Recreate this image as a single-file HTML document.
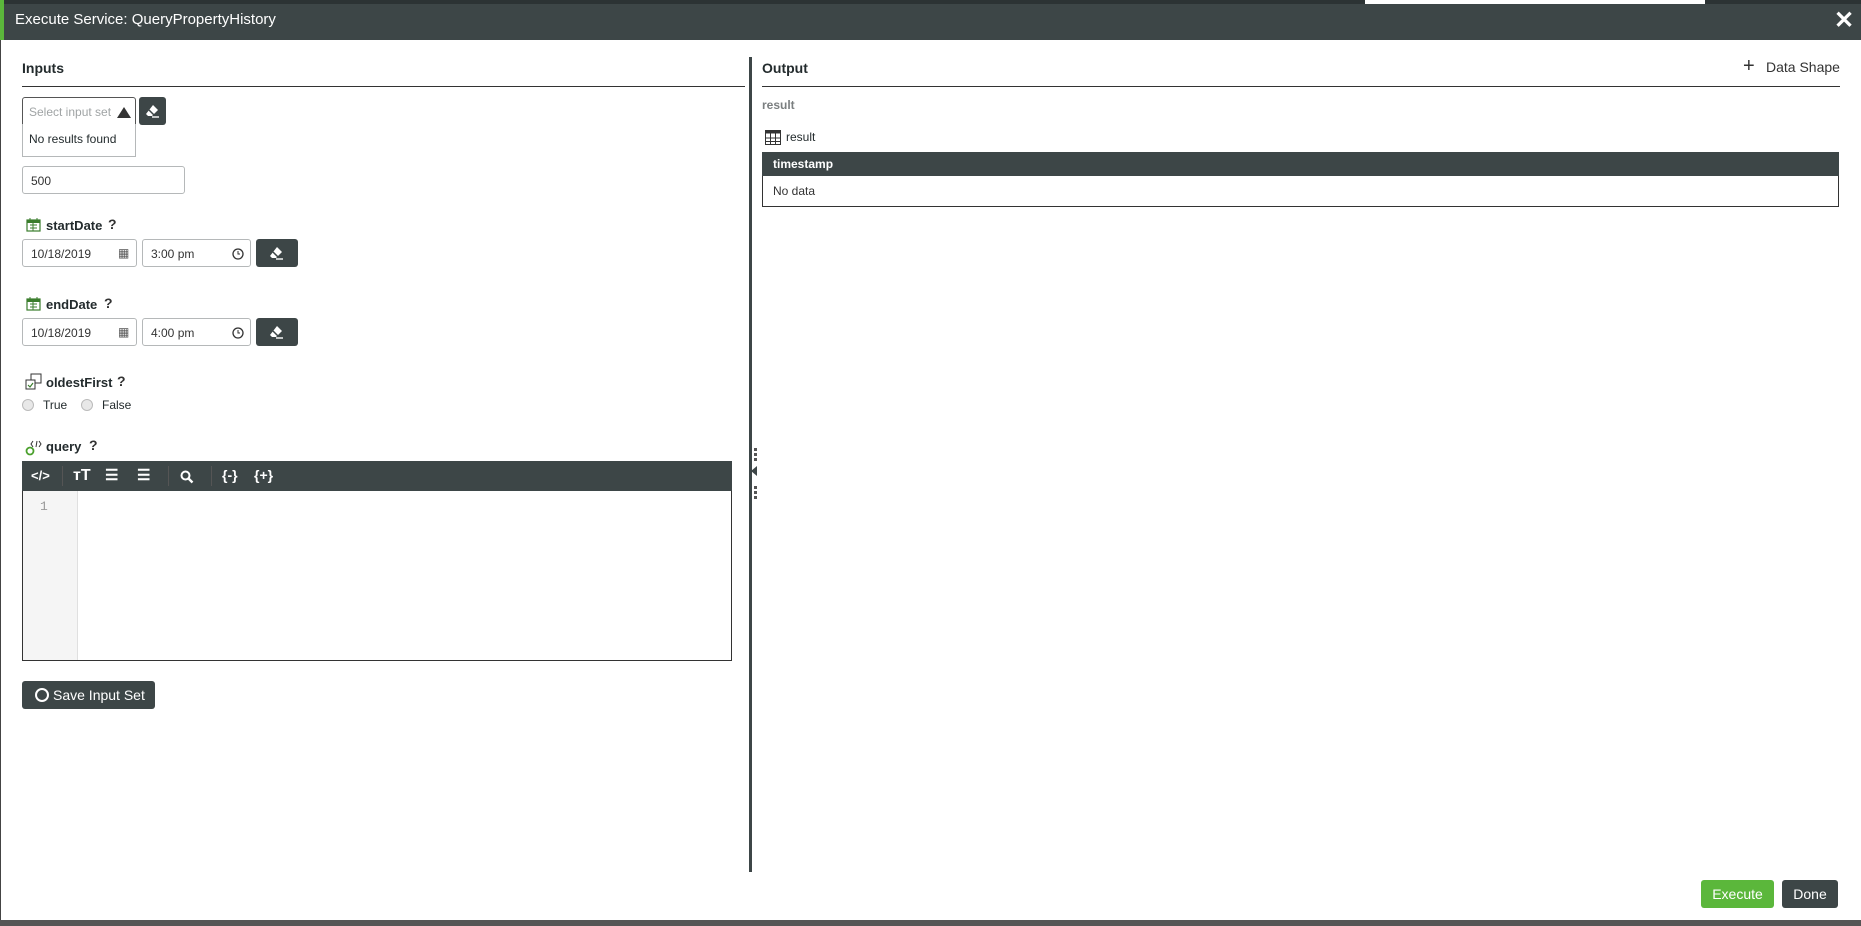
<!DOCTYPE html>
<html><head><meta charset="utf-8"><style>
*{box-sizing:border-box;margin:0;padding:0}
body{width:1861px;height:926px;position:relative;overflow:hidden;background:#fff;font-family:"Liberation Sans",Arial,sans-serif;color:#232b2d}
.a{position:absolute}
.hdr{left:0;top:0;width:1861px;height:40px;background:#3d4647}
.btn{background:#3d4647;border-radius:3px}
.inp{border:1px solid #b5b8b9;border-radius:3px;background:#fff;font-size:12px;color:#333}
.lbl{font-size:13px;font-weight:bold;color:#232b2d}
.q{font-size:14px;font-weight:bold;color:#333}
.tb{color:#fff;font-size:15px;font-weight:bold}
</style></head><body>
<div class="a hdr"></div>
<div class="a" style="left:0;top:0;width:1861px;height:4px;background:#2c3334"></div>
<div class="a" style="left:1365px;top:0;width:340px;height:4px;background:#fff"></div>
<div class="a" style="left:0;top:0;width:4px;height:40px;background:#5bb73b"></div>
<div class="a" style="left:15px;top:11px;font-size:15px;color:#fff">Execute Service: QueryPropertyHistory</div>
<div class="a" style="left:1834px;top:6px;font-size:24px;color:#fff;font-weight:bold">✕</div>
<div class="a" style="left:0;top:40px;width:1px;height:880px;background:#444"></div>

<div class="a" style="left:22px;top:60px;font-size:14px;font-weight:bold">Inputs</div>
<div class="a" style="left:22px;top:86px;width:723px;height:1px;background:#333"></div>

<div class="a inp" style="left:22px;top:97px;width:114px;height:28px;border-color:#555;border-radius:3px 3px 0 0"><span class="a" style="left:6px;top:7px;color:#a0a4a5">Select input set</span><span class="a" style="left:94px;top:9px;width:0;height:0;border-left:7px solid transparent;border-right:7px solid transparent;border-bottom:11px solid #333"></span></div>
<div class="a" style="left:22px;top:124px;width:114px;height:33px;border:1px solid #b5b8b9;border-top:none;background:#fff;font-size:12px"><span class="a" style="left:6px;top:8px">No results found</span></div>
<div class="a btn" style="left:139px;top:97px;width:27px;height:28px"><svg class="a" style="left:6px;top:7px" width="15" height="14" viewBox="0 0 15 14"><path d="M8 1l5 5-6 6H3L1 10z" fill="#fff"/><path d="M4 6l5 5" stroke="#3d4647" stroke-width="1.5"/><path d="M7 13h7" stroke="#fff" stroke-width="1.4"/></svg></div>

<div class="a inp" style="left:22px;top:166px;width:163px;height:28px"><span class="a" style="left:8px;top:7px">500</span></div>

<svg class="a" style="left:26px;top:217px" width="15" height="15" viewBox="0 0 15 15"><rect x="1" y="3" width="13" height="11" fill="none" stroke="#3a7d2c" stroke-width="1.2"/><rect x="1" y="3" width="13" height="3" fill="#3a7d2c"/><path d="M4 1v3M11 1v3M4 8h7M4 11h7M7 6v8" stroke="#3a7d2c"/></svg>
<div class="a lbl" style="left:46px;top:218px">startDate</div><div class="a q" style="left:108px;top:216px">?</div>
<div class="a inp" style="left:22px;top:239px;width:115px;height:28px"><span class="a" style="left:8px;top:7px">10/18/2019</span><span class="a" style="left:95px;top:6px;font-size:12px;color:#555">▦</span></div>
<div class="a inp" style="left:142px;top:239px;width:109px;height:28px"><span class="a" style="left:8px;top:7px">3:00 pm</span><svg class="a" style="left:89px;top:8px" width="12" height="12"><circle cx="6" cy="6" r="5" fill="none" stroke="#333" stroke-width="1.3"/><path d="M6 3v3h2" stroke="#333" fill="none"/></svg></div>
<div class="a btn" style="left:256px;top:239px;width:42px;height:28px"><svg class="a" style="left:13px;top:7px" width="15" height="14" viewBox="0 0 15 14"><path d="M8 1l5 5-6 6H3L1 10z" fill="#fff"/><path d="M4 6l5 5" stroke="#3d4647" stroke-width="1.5"/><path d="M7 13h7" stroke="#fff" stroke-width="1.4"/></svg></div>

<svg class="a" style="left:26px;top:296px" width="15" height="15" viewBox="0 0 15 15"><rect x="1" y="3" width="13" height="11" fill="none" stroke="#3a7d2c" stroke-width="1.2"/><rect x="1" y="3" width="13" height="3" fill="#3a7d2c"/><path d="M4 1v3M11 1v3M4 8h7M4 11h7M7 6v8" stroke="#3a7d2c"/></svg>
<div class="a lbl" style="left:46px;top:297px">endDate</div><div class="a q" style="left:104px;top:295px">?</div>
<div class="a inp" style="left:22px;top:318px;width:115px;height:28px"><span class="a" style="left:8px;top:7px">10/18/2019</span><span class="a" style="left:95px;top:6px;font-size:12px;color:#555">▦</span></div>
<div class="a inp" style="left:142px;top:318px;width:109px;height:28px"><span class="a" style="left:8px;top:7px">4:00 pm</span><svg class="a" style="left:89px;top:8px" width="12" height="12"><circle cx="6" cy="6" r="5" fill="none" stroke="#333" stroke-width="1.3"/><path d="M6 3v3h2" stroke="#333" fill="none"/></svg></div>
<div class="a btn" style="left:256px;top:318px;width:42px;height:28px"><svg class="a" style="left:13px;top:7px" width="15" height="14" viewBox="0 0 15 14"><path d="M8 1l5 5-6 6H3L1 10z" fill="#fff"/><path d="M4 6l5 5" stroke="#3d4647" stroke-width="1.5"/><path d="M7 13h7" stroke="#fff" stroke-width="1.4"/></svg></div>

<svg class="a" style="left:25px;top:373px" width="18" height="17" viewBox="0 0 18 17"><rect x="6" y="1" width="10" height="9" fill="none" stroke="#333"/><rect x="1" y="7" width="9" height="9" fill="#fff" stroke="#333"/><path d="M3 12l2 2 3-4" stroke="#3a7d2c" fill="none" stroke-width="1.2"/></svg>
<div class="a lbl" style="left:46px;top:375px">oldestFirst</div><div class="a q" style="left:117px;top:373px">?</div>
<div class="a" style="left:22px;top:399px;width:12px;height:12px;border-radius:50%;border:1px solid #bbb;background:#e8e8e8"></div>
<div class="a" style="left:43px;top:398px;font-size:12px">True</div>
<div class="a" style="left:81px;top:399px;width:12px;height:12px;border-radius:50%;border:1px solid #bbb;background:#e8e8e8"></div>
<div class="a" style="left:102px;top:398px;font-size:12px">False</div>

<svg class="a" style="left:25px;top:440px" width="18" height="16" viewBox="0 0 18 16"><circle cx="5" cy="11" r="3.5" fill="none" stroke="#4aa02c" stroke-width="1.8"/><path d="M8 1l-2 3 2 3M12 1l-1 6M14 1l2 3-2 3" stroke="#333" fill="none"/></svg>
<div class="a lbl" style="left:46px;top:439px">query</div><div class="a q" style="left:89px;top:437px">?</div>
<div class="a" style="left:22px;top:461px;width:710px;height:30px;background:#3d4647"></div>
<div class="a" style="left:22px;top:491px;width:710px;height:170px;border:1px solid #333;border-top:none;background:#fff"></div>
<div class="a" style="left:23px;top:491px;width:55px;height:169px;background:#f5f5f5;border-right:1px solid #e0e0e0"></div>
<div class="a" style="left:40px;top:499px;font-size:13px;color:#999;font-family:'Liberation Mono',monospace">1</div>
<div class="a tb" style="left:31px;top:468px;font-size:13px">&lt;/&gt;</div>
<div class="a" style="left:62px;top:466px;width:1px;height:20px;background:#555"></div>
<div class="a tb" style="left:73px;top:467px;font-size:16px">тT</div>
<div class="a tb" style="left:105px;top:466px">☰</div>
<div class="a tb" style="left:137px;top:466px">☰</div>
<div class="a" style="left:168px;top:466px;width:1px;height:20px;background:#555"></div>
<svg class="a" style="left:180px;top:470px" width="14" height="14"><circle cx="5.5" cy="5.5" r="4" fill="none" stroke="#fff" stroke-width="2"/><path d="M8.5 8.5l4 4" stroke="#fff" stroke-width="2.4"/></svg>
<div class="a" style="left:211px;top:466px;width:1px;height:20px;background:#555"></div>
<div class="a tb" style="left:222px;top:467px;font-size:14px">{-}</div>
<div class="a tb" style="left:254px;top:467px;font-size:14px">{+}</div>

<div class="a btn" style="left:22px;top:681px;width:133px;height:28px"><span class="a" style="left:13px;top:7px;width:14px;height:14px;border:2px solid #fff;border-radius:50%"></span><span class="a" style="left:31px;top:6px;color:#fff;font-size:14px">Save Input Set</span></div>

<div class="a" style="left:749px;top:57px;width:3px;height:815px;background:#3d4647"></div>
<div class="a" style="left:754px;top:448px;width:3px;height:3px;background:#555"></div>
<div class="a" style="left:754px;top:453px;width:3px;height:3px;background:#555"></div>
<div class="a" style="left:754px;top:458px;width:3px;height:3px;background:#555"></div>
<div class="a" style="left:751px;top:466px;width:0;height:0;border-top:5px solid transparent;border-bottom:5px solid transparent;border-right:6px solid #3d4647"></div>
<div class="a" style="left:754px;top:486px;width:3px;height:3px;background:#555"></div>
<div class="a" style="left:754px;top:491px;width:3px;height:3px;background:#555"></div>
<div class="a" style="left:754px;top:496px;width:3px;height:3px;background:#555"></div>

<div class="a" style="left:762px;top:60px;font-size:14px;font-weight:bold">Output</div>
<div class="a" style="left:1743px;top:55px;font-size:20px;color:#333">+</div>
<div class="a" style="left:1766px;top:59px;font-size:14px;color:#333">Data Shape</div>
<div class="a" style="left:762px;top:86px;width:1078px;height:1px;background:#333"></div>
<div class="a" style="left:762px;top:98px;font-size:12px;font-weight:bold;color:#7b7f80">result</div>
<svg class="a" style="left:765px;top:130px" width="16" height="15" viewBox="0 0 16 15"><rect x="0.5" y="0.5" width="15" height="14" fill="none" stroke="#333"/><rect x="0.5" y="0.5" width="15" height="3" fill="#333"/><path d="M0 8h16M0 11.5h16M5.5 3v12M10.5 3v12" stroke="#333"/></svg>
<div class="a" style="left:786px;top:130px;font-size:12px">result</div>
<div class="a" style="left:762px;top:152px;width:1077px;height:55px;border:1px solid #333;background:#fff"></div>
<div class="a" style="left:762px;top:152px;width:1077px;height:24px;background:#3d4647"></div>
<div class="a" style="left:773px;top:157px;font-size:12px;font-weight:bold;color:#fff">timestamp</div>
<div class="a" style="left:773px;top:184px;font-size:12px;color:#333">No data</div>

<div class="a" style="left:1701px;top:880px;width:73px;height:28px;background:#5bb73b;border-radius:3px;color:#fff;font-size:14px;text-align:center;line-height:28px">Execute</div>
<div class="a btn" style="left:1782px;top:880px;width:56px;height:28px;color:#fff;font-size:14px;text-align:center;line-height:28px">Done</div>
<div class="a" style="left:0;top:920px;width:1861px;height:6px;background:#555"></div>
</body></html>
